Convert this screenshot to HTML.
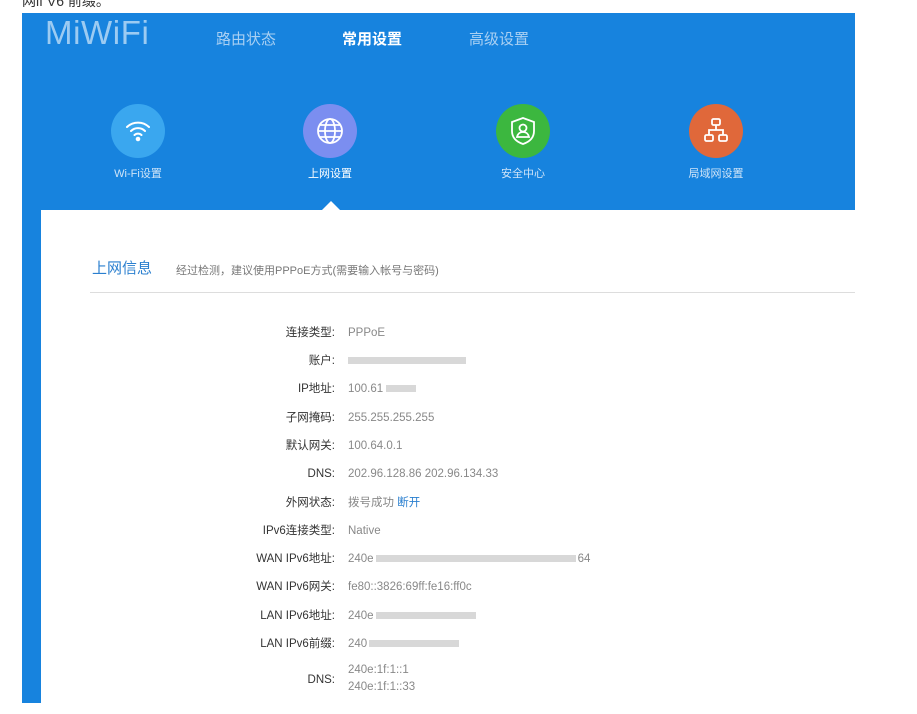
<!DOCTYPE html>
<html><head><meta charset="utf-8"><style>
body{margin:0;width:917px;height:714px;background:#fff;position:relative;overflow:hidden;font-family:"Liberation Sans","Noto Sans CJK SC",sans-serif}
.abs{position:absolute}
#blue{left:22px;top:13px;width:833px;height:690px;background:#1783de}
#card{left:41px;top:210px;width:814px;height:493px;background:#fff}
.nav{top:30px;font-size:15px;color:#a9d0f3;line-height:20px}
.ic{width:54px;height:54px;border-radius:50%;top:104px}
.il{top:165px;font-size:11px;color:#cfe4f8;width:120px;text-align:center}
.lab,.val{line-height:16px;height:16px}
.lab{left:200px;width:135px;text-align:right;font-size:11.5px;color:#333}
.val{left:348px;font-size:11.5px;color:#888}
.blur{display:inline-block;height:7px;background:#d8d8d8;vertical-align:middle}
</style></head><body>
<div class="abs" style="left:22px;top:-9px;font-size:14px;color:#333">网if V6 前缀。</div>
<div class="abs" id="blue"></div>
<div class="abs" style="left:45px;top:14px;font-size:33px;color:#9ccbf2;letter-spacing:0.6px">MiWiFi</div>
<div class="abs nav" style="left:216px">路由状态</div>
<div class="abs nav" style="left:342px;color:#fff;font-weight:bold">常用设置</div>
<div class="abs nav" style="left:469px">高级设置</div>

<div class="abs ic" style="left:111px;background:#3aa7ef"><svg width="54" height="54" viewBox="0 0 54 54" fill="none" stroke="#fff" stroke-width="2" stroke-linecap="round"><path d="M16 23a16 16 0 0 1 22 0M20 27a10 10 0 0 1 14 0M23.5 31a5 5 0 0 1 7 0"/><circle cx="27" cy="35" r="1.3" fill="#fff"/></svg></div>
<div class="abs il" style="left:78px">Wi-Fi设置</div>
<div class="abs ic" style="left:303px;background:#7b8ef0"><svg width="54" height="54" viewBox="0 0 54 54" fill="none" stroke="#fff" stroke-width="1.8"><circle cx="27" cy="27" r="12"/><ellipse cx="27" cy="27" rx="5" ry="12"/><path d="M15 27h24M17 21h20M17 33h20"/></svg></div>
<div class="abs il" style="left:270px;color:#fff">上网设置</div>
<div class="abs ic" style="left:496px;background:#3cb73f"><svg width="54" height="54" viewBox="0 0 54 54" fill="none" stroke="#fff" stroke-width="1.8"><path d="M27 14l11 4v9c0 7-5 11-11 13c-6-2-11-6-11-13v-9z"/><circle cx="27" cy="24" r="3.5"/><path d="M21 33c1-4 3-5 6-5s5 1 6 5z"/></svg></div>
<div class="abs il" style="left:463px">安全中心</div>
<div class="abs ic" style="left:689px;background:#e0683a"><svg width="54" height="54" viewBox="0 0 54 54" fill="none" stroke="#fff" stroke-width="1.8"><rect x="23" y="15" width="8" height="6" rx="1.5"/><rect x="16" y="31" width="8" height="6" rx="1.5"/><rect x="30" y="31" width="8" height="6" rx="1.5"/><path d="M27 21v5M20 31v-5h14v5"/></svg></div>
<div class="abs il" style="left:656px">局域网设置</div>

<div class="abs" id="card"></div>
<div class="abs" style="left:321px;top:201px;width:0;height:0;border-left:10px solid transparent;border-right:10px solid transparent;border-bottom:10px solid #fff"></div>
<div class="abs" style="left:92px;top:259px;font-size:15px;color:#2a7fcf;line-height:20px">上网信息</div>
<div class="abs" style="left:176px;top:263px;font-size:11px;color:#777;line-height:16px">经过检测，建议使用PPPoE方式(需要输入帐号与密码)</div>
<div class="abs" style="left:90px;top:292px;width:765px;height:1px;background:#ddd"></div>

<div class="abs lab" style="top:325px">连接类型:</div><div class="abs val" style="top:325px">PPPoE</div>
<div class="abs lab" style="top:353px">账户:</div><div class="abs val" style="top:353px"><span class="blur" style="width:118px"></span></div>
<div class="abs lab" style="top:381px">IP地址:</div><div class="abs val" style="top:381px">100.61<span class="blur" style="width:30px;margin-left:3px"></span></div>
<div class="abs lab" style="top:410px">子网掩码:</div><div class="abs val" style="top:410px">255.255.255.255</div>
<div class="abs lab" style="top:438px">默认网关:</div><div class="abs val" style="top:438px">100.64.0.1</div>
<div class="abs lab" style="top:466px">DNS:</div><div class="abs val" style="top:466px">202.96.128.86 202.96.134.33</div>
<div class="abs lab" style="top:495px">外网状态:</div><div class="abs val" style="top:495px">拨号成功 <span style="color:#2a7fcf">断开</span></div>
<div class="abs lab" style="top:523px">IPv6连接类型:</div><div class="abs val" style="top:523px">Native</div>
<div class="abs lab" style="top:551px">WAN IPv6地址:</div><div class="abs val" style="top:551px">240e<span class="blur" style="width:200px;margin:0 2px"></span>64</div>
<div class="abs lab" style="top:579px">WAN IPv6网关:</div><div class="abs val" style="top:579px">fe80::3826:69ff:fe16:ff0c</div>
<div class="abs lab" style="top:608px">LAN IPv6地址:</div><div class="abs val" style="top:608px">240e<span class="blur" style="width:100px;margin-left:2px"></span></div>
<div class="abs lab" style="top:636px">LAN IPv6前缀:</div><div class="abs val" style="top:636px">240<span class="blur" style="width:90px;margin-left:2px"></span></div>
<div class="abs lab" style="top:672px">DNS:</div>
<div class="abs val" style="top:662px;line-height:17px;height:auto">240e:1f:1::1<br>240e:1f:1::33</div>
</body></html>
